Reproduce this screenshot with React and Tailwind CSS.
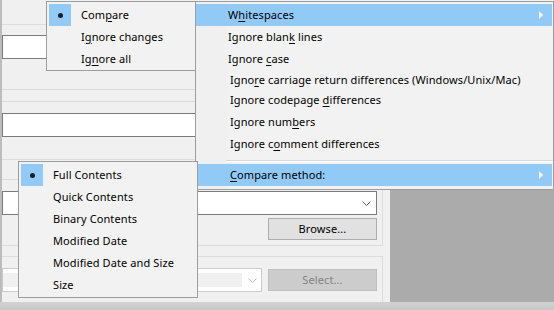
import React from 'react';

const K = ({ children }) => (
  <span className="underline underline-offset-[2px] decoration-1">{children}</span>
);

const Arrow = () => (
  <span className="absolute right-[9px] top-1/2 -translate-y-1/2 w-0 h-0 border-y-[4px] border-y-transparent border-l-[4px] border-l-white" />
);

const Bullet = () => <span className="w-[5px] h-[5px] rounded-full bg-[#1e1e1e]" />;

function MainItem({ children, h = 'h-[22px]', active, arrow, pad = 'pl-[32px]' }) {
  return (
    <div
      className={`relative flex items-center ${h} ${pad} mr-[1px] ${active ? 'bg-[#91c9f7]' : ''}`}
    >
      <span className="whitespace-nowrap">{children}</span>
      {arrow && <Arrow />}
    </div>
  );
}

function CheckItem({ children, checked }) {
  return (
    <div className="flex items-center h-[22px] ml-[2px]">
      <div className={`w-[22px] h-[22px] flex items-center justify-center ${checked ? 'bg-[#91c9f7]' : ''}`}>
        {checked && <Bullet />}
      </div>
      <span className="ml-[10px] whitespace-nowrap">{children}</span>
    </div>
  );
}

const Chevron = ({ color = '#606060' }) => (
  <svg width="9" height="5" viewBox="0 0 9 5" className="shrink-0">
    <path d="M0.5 0.5 L4.5 4.5 L8.5 0.5" fill="none" stroke={color} strokeWidth="1" />
  </svg>
);

function Dialog() {
  return (
    <div className="flex flex-col w-full h-full">
      <div className="flex h-[302px]">
        <div className="w-[390px] border-l-2 border-[#bcbcbc] flex flex-col">
          <div className="h-[25px] border-b border-[#dcdcdc] w-[380px]" />
          <div className="mt-[10px] h-[24px] w-[378px] border border-[#7a7a7a] bg-white" />
          <div className="mt-[30px] h-[13px] w-[380px] border-y border-[#dadada]" />
          <div className="mt-[11px] h-[24px] w-[378px] border border-[#7a7a7a] bg-white" />
          <div className="mt-[22px] h-[20px] w-[380px] border-t border-[#dcdcdc]" />
          <div className="h-[67px] w-[381px] border-t border-r border-b border-[#dcdcdc] pt-[11px]">
            <div className="h-[24px] w-[375px] border border-[#7a7a7a] bg-white flex items-center justify-end pr-[5px]">
              <Chevron />
            </div>
            <div className="mt-[3px] ml-[266px] h-[22px] w-[109px] border border-[#adadad] bg-[#e1e1e1] flex items-center justify-center">
              Browse...
            </div>
          </div>
          <div className="mt-[10px] flex-1 w-[381px] border-t border-r border-[#dcdcdc] pt-[11px] flex items-start gap-[6px]">
            <div className="h-[24px] w-[260px] border border-[#cccccc] bg-white flex items-center pl-[0px] pr-[4px]">
              <div className="h-[14px] flex-1 bg-[#f0f0f0] mr-[6px]" />
              <Chevron color="#b4b4b4" />
            </div>
            <div className="mt-[1px] h-[22px] w-[109px] border border-[#bfbfbf] bg-[#cccccc] text-[#838383] flex items-center justify-center">
              Select...
            </div>
          </div>
        </div>
        <div className="flex-1 flex flex-col">
          <div className="h-[190px]" />
          <div className="flex-1 bg-[#ababab]" />
        </div>
      </div>
      <div className="flex-1 bg-gradient-to-b from-[#d2d2d2] to-[#c6c6c6]" />
    </div>
  );
}

export default function App() {
  return (
    <div className="relative w-[554px] h-[310px] overflow-hidden bg-[#f0f0f0] text-black text-[11px] tracking-[0.1px] font-['Noto_Sans',sans-serif]">
      <Dialog />

      {/* Whitespaces submenu */}
      <div className="absolute left-[46px] top-[1px] w-[150px] h-[70px] border border-[#9d9d9d] bg-[#f2f2f2] pt-[2px] z-10">
        <CheckItem checked>
          Com<K>p</K>are
        </CheckItem>
        <CheckItem>
          I<K>g</K>nore changes
        </CheckItem>
        <CheckItem>
          Ig<K>n</K>ore all
        </CheckItem>
      </div>

      {/* main context menu */}
      <div className="absolute left-[195px] top-[1px] w-[359px] border border-[#9d9d9d] bg-[linear-gradient(to_right,#f0f0f0_31px,#f2f2f2_31px)] pt-[2px] pb-[3px] z-20">
        <MainItem active arrow>
          W<K>h</K>itespaces
        </MainItem>
        <MainItem>
          Ignore blan<K>k</K> lines
        </MainItem>
        <MainItem>
          Ignore <K>c</K>ase
        </MainItem>
        <MainItem h="h-[20px]" pad="pl-[34px]">
          Igno<K>r</K>e carriage return differences (Windows/Unix/Mac)
        </MainItem>
        <MainItem h="h-[21px]" pad="pl-[34px]">
          Ignore codepage <K>d</K>ifferences
        </MainItem>
        <MainItem pad="pl-[34px]">
          Ignore num<K>b</K>ers
        </MainItem>
        <MainItem pad="pl-[34px]">
          Ignore c<K>o</K>mment differences
        </MainItem>
        <div className="h-[9px] pt-[5px] pl-[30px]">
          <div className="border-t border-[#d7d7d7] border-b border-b-white" />
        </div>
        <MainItem active arrow pad="pl-[34px]">
          <K>C</K>ompare method:
        </MainItem>
      </div>

      {/* compare method submenu */}
      <div className="absolute left-[18px] top-[161px] w-[180px] border border-[#9d9d9d] bg-[#f2f2f2] pt-[2px] pb-[1px] z-30">
        <CheckItem checked>Full Contents</CheckItem>
        <CheckItem>Quick Contents</CheckItem>
        <CheckItem>Binary Contents</CheckItem>
        <CheckItem>Modified Date</CheckItem>
        <CheckItem>Modified Date and Size</CheckItem>
        <CheckItem>Size</CheckItem>
      </div>
    </div>
  );
}
